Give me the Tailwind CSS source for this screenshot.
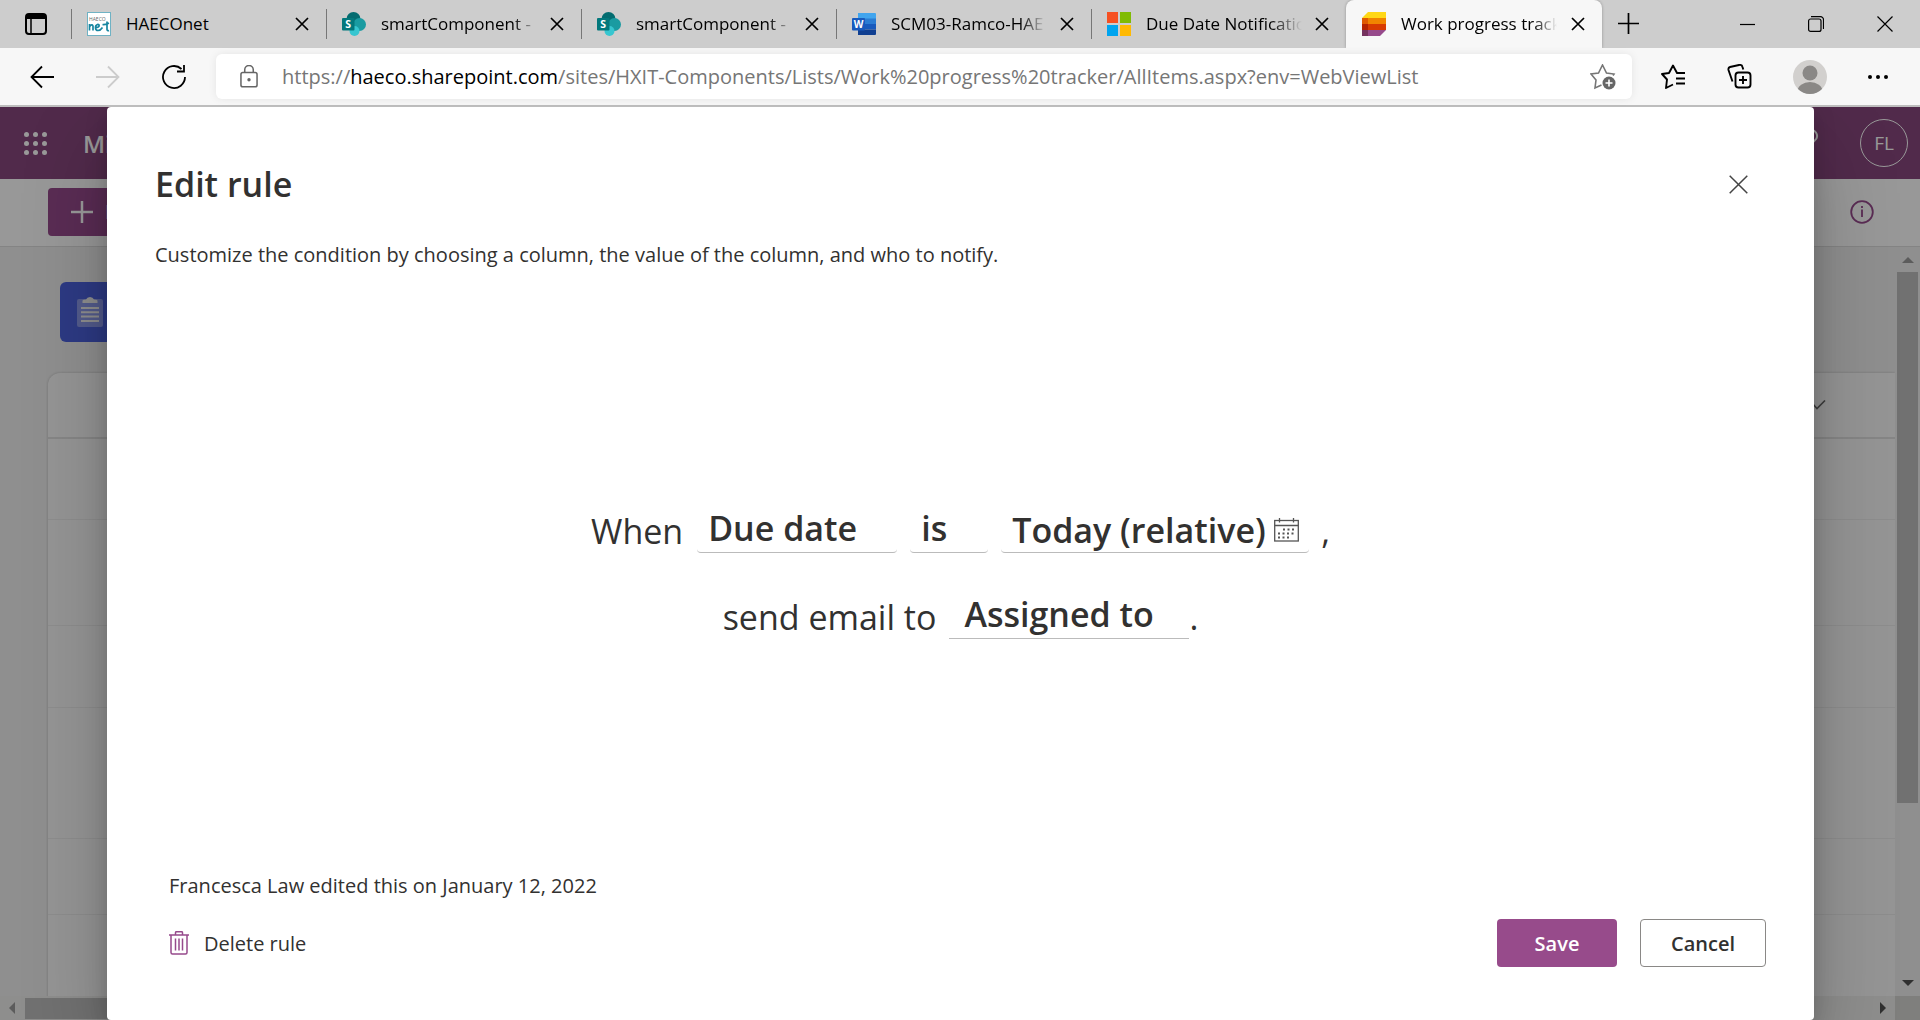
<!DOCTYPE html>
<html lang="en">
<head>
<meta charset="utf-8">
<title>Work progress tracker</title>
<script src="https://cdn.jsdelivr.net/npm/@tailwindcss/browser@4"></script>
</head>
<body class="flex h-screen flex-col overflow-hidden bg-[#cdcdcd] font-['Open_Sans','Noto_Sans',sans-serif] text-[#323130]">

<svg class="hidden">
  <symbol id="x" viewBox="0 0 14 14"><path d="M1 1l12 12M13 1L1 13" fill="none" stroke="currentColor" stroke-width="1.700"/></symbol>
  <symbol id="sharepoint" viewBox="0 0 24 24">
    <circle cx="11.500" cy="7" r="7" fill="#036c70"/><circle cx="17.500" cy="12.500" r="6.500" fill="#1a9ba1"/><circle cx="12.500" cy="19" r="5" fill="#37c6d0"/>
    <rect y="6" width="12.500" height="12.500" rx="1" fill="#03787c"/>
    <text x="6.200" y="16" text-anchor="middle" font-family="Open Sans" font-weight="700" font-size="10.500" fill="#fff">S</text>
  </symbol>
</svg>

<!-- Tab strip -->
<header class="flex h-12 shrink-0 text-[17px] text-black">
  <div class="flex w-[71px] shrink-0 items-center pl-6">
    <button aria-label="Tab actions"><svg class="size-6" viewBox="0 0 24 24"><rect x="2" y="2" width="20" height="20" rx="3" fill="none" stroke="#000" stroke-width="2"/><path d="M2 7V5a3 3 0 013-3h14a3 3 0 013 3v2z"/><path d="M7 7v15" stroke="#000" stroke-width="1.500"/></svg></button>
  </div>
  <nav class="flex min-w-0">
    <div class="relative flex w-[255px] items-center pr-[17px] pl-4 before:absolute before:left-0 before:h-[30px] before:w-px before:bg-[#777]">
      <svg class="mr-[15px] size-6 shrink-0" viewBox="0 0 24 24"><rect x=".5" y=".5" width="23" height="23" fill="#fff" stroke="#6fb2c4"/><text x="2" y="9" font-family="Open Sans" font-size="5" fill="#666">HAECO</text><path d="M2.500 12v6.500M2.500 15c1-3 4-3 3.500.500v3M8.500 15.500c5 0 4-3.500 2-3-3 1-2.500 6 .5 6 2 0 3.500-1.500 4.500-3M20 9.500v8c0 1 1 1.500 2 1M15.500 12.500c2 .5 4-.5 6.500-1.500" fill="none" stroke="#1785a0" stroke-width="1.700"/></svg>
      <a href="#" class="whitespace-nowrap">HAECOnet</a>
      <button class="ml-auto" aria-label="Close tab"><svg class="size-[14px]"><use href="#x"/></svg></button>
    </div>
    <div class="relative flex w-[255px] items-center pr-[17px] pl-4 before:absolute before:left-0 before:h-[30px] before:w-px before:bg-[#777]">
      <svg class="mr-[15px] size-6 shrink-0"><use href="#sharepoint"/></svg>
      <a href="#" class="whitespace-nowrap mask-[linear-gradient(90deg,#000_88%,rgba(0,0,0,.3))]">smartComponent -</a>
      <button class="ml-auto" aria-label="Close tab"><svg class="size-[14px]"><use href="#x"/></svg></button>
    </div>
    <div class="relative flex w-[255px] items-center pr-[17px] pl-4 before:absolute before:left-0 before:h-[30px] before:w-px before:bg-[#777]">
      <svg class="mr-[15px] size-6 shrink-0"><use href="#sharepoint"/></svg>
      <a href="#" class="whitespace-nowrap mask-[linear-gradient(90deg,#000_88%,rgba(0,0,0,.3))]">smartComponent -</a>
      <button class="ml-auto" aria-label="Close tab"><svg class="size-[14px]"><use href="#x"/></svg></button>
    </div>
    <div class="relative flex w-[255px] items-center pr-[17px] pl-4 before:absolute before:left-0 before:h-[30px] before:w-px before:bg-[#777]">
      <svg class="mr-[15px] size-6 shrink-0" viewBox="0 0 24 24"><path d="M6 1h17a1 1 0 011 1v5H6z" fill="#41a5ee"/><path d="M6 6.500h18V12H6z" fill="#2b7cd3"/><path d="M6 12h18v5.500H6z" fill="#185abd"/><path d="M6 17.500h18V22a1 1 0 01-1 1H6z" fill="#103f91"/><rect y="6" width="13" height="12.500" rx="1" fill="#185abd"/><text x="6.500" y="16" text-anchor="middle" font-family="Open Sans" font-weight="700" font-size="10" fill="#fff">W</text></svg>
      <a href="#" class="whitespace-nowrap mask-[linear-gradient(90deg,#000_85%,rgba(0,0,0,.1))]">SCM03-Ramco-HAE</a>
      <button class="ml-auto" aria-label="Close tab"><svg class="size-[14px]"><use href="#x"/></svg></button>
    </div>
    <div class="relative flex w-[255px] items-center pr-[17px] pl-4 before:absolute before:left-0 before:h-[30px] before:w-px before:bg-[#777]">
      <svg class="mr-[15px] size-6 shrink-0" viewBox="0 0 24 24"><path d="M0 0h11v11H0z" fill="#f65022"/><path d="M13 0h11v11H13z" fill="#80bb03"/><path d="M0 13h11v11H0z" fill="#00a4ef"/><path d="M13 13h11v11H13z" fill="#ffb902"/></svg>
      <a href="#" class="w-[156px] overflow-hidden whitespace-nowrap mask-[linear-gradient(90deg,#000_80%,transparent)]">Due Date Notification</a>
      <button class="ml-auto" aria-label="Close tab"><svg class="size-[14px]"><use href="#x"/></svg></button>
    </div>
    <div class="flex w-[256px] items-center rounded-t-lg bg-[#f7f7f7] pr-[17px] pl-4 shadow-[0_0_3px_rgba(0,0,0,.3)]">
      <svg class="mr-[15px] size-6 shrink-0" viewBox="0 0 24 24"><path d="M6 0h18v6H0z" fill="#ffd817"/><path d="M0 6h24v6H0z" fill="#f18500"/><path d="M0 6h6v6H0z" fill="#e05b00"/><path d="M0 12h24v6H0z" fill="#d83b01"/><path d="M0 12h6v6H0z" fill="#b52500"/><path d="M0 18h24l-6 6H0z" fill="#964a8b"/><path d="M0 18h6v6H0z" fill="#75325f"/></svg>
      <a href="#" class="w-[156px] overflow-hidden whitespace-nowrap mask-[linear-gradient(90deg,#000_85%,transparent)]">Work progress tracker</a>
      <button class="ml-auto" aria-label="Close tab"><svg class="size-[14px]"><use href="#x"/></svg></button>
    </div>
  </nav>
  <button class="ml-4 pb-px" aria-label="New tab"><svg class="size-[21px]" viewBox="0 0 21 21"><path d="M10.500 0v21M0 10.500h21" stroke="#000" stroke-width="1.700"/></svg></button>
  <div class="ml-auto flex items-center gap-[53px] pr-[27px]">
    <button aria-label="Minimize"><svg class="size-[15px]" viewBox="0 0 16 16"><path d="M0 8h16" stroke="#000" stroke-width="1.300"/></svg></button>
    <button aria-label="Restore"><svg class="size-4" viewBox="0 0 16 16" fill="none" stroke="#000" stroke-width="1.200"><rect x=".6" y="3" width="12.400" height="12.400" rx="2"/><path d="M3 .7h9.500a3 3 0 013 3V13"/></svg></button>
    <button aria-label="Close"><svg class="size-4" viewBox="0 0 16 16"><path d="M.5.500l15 15M15.500.500l-15 15" stroke="#000" stroke-width="1.200"/></svg></button>
  </div>
</header>

<!-- Address bar -->
<div class="relative flex h-[59px] shrink-0 items-center border-b-2 border-[#bdbdbd] bg-[#f7f7f7] pr-8">
  <div class="flex w-[216px] shrink-0 items-center gap-[42px] pl-[30px]">
    <button aria-label="Back"><svg class="size-6" viewBox="0 0 24 24" fill="none" stroke="#000" stroke-width="1.800"><path d="M24 12H1.500M12 1.500L1.500 12 12 22.500"/></svg></button>
    <button aria-label="Forward"><svg class="size-6" viewBox="0 0 24 24" fill="none" stroke="#ccc" stroke-width="1.800"><path d="M0 12h22.500M12 1.500L22.500 12 12 22.500"/></svg></button>
    <button aria-label="Refresh"><svg class="size-6" viewBox="0 0 24 24" fill="none" stroke="#000" stroke-width="1.800"><path d="M23 12a11 11 0 11-3.500-8M22 0v6.500h-7"/></svg></button>
  </div>
  <div class="flex h-[45px] min-w-0 flex-1 items-center rounded-md bg-white px-[16px] pl-6 shadow-[0_0_8px_rgba(0,0,0,.08)]">
    <svg class="w-[18px] shrink-0" viewBox="0 0 19 24" fill="none" stroke="#666" stroke-width="1.600"><rect x="1" y="8" width="17" height="15" rx="2"/><path d="M5 8V5a4.500 4.500 0 019 0v3"/><circle cx="9.500" cy="15.500" r="1" fill="#555"/></svg>
    <a href="#" class="ml-6 flex-1 overflow-hidden text-xl whitespace-nowrap text-[#767676]">https://<span class="text-black">haeco.sharepoint.com</span>/sites/HXIT-Components/Lists/Work%20progress%20tracker/AllItems.aspx?env=WebViewList</a>
    <button aria-label="Add to favorites"><svg class="size-[26px]" viewBox="0 0 26 26" fill="none" stroke="#767676" stroke-width="1.600"><path d="M11.500 21L5 24l1-8-5-6 7.500-1L12.500 1l4 8 7.500 1-1 1.500"/><circle cx="19" cy="19" r="6.500" fill="#666" stroke="none"/><path d="M19 15.500v7M15.500 19h7" stroke="#fff"/></svg></button>
  </div>
  <div class="ml-[29px] flex items-center gap-[41px]">
    <button aria-label="Favorites"><svg class="size-[25px]" viewBox="0 0 25 25" fill="none" stroke="#000" stroke-width="1.900" stroke-linejoin="round"><path d="M12 20.500L5 24l1-8.500-5-5.500 7-1 4-7.500L16 9h8M15 14.500h9M15 19.500h9"/></svg></button>
    <button aria-label="Collections"><svg class="size-[25px]" viewBox="0 0 25 25" fill="none" stroke="#000" stroke-width="1.900"><rect x="8.500" y="8.500" width="15" height="15" rx="3"/><path d="M16 12v8M12 16h8M5.500 17.500L1.500 6Q1 3.500 3 3l9-2q3-.5 3.500 2l.8 2.500"/></svg></button>
    <button aria-label="Profile"><svg class="size-[34px]" viewBox="0 0 34 34"><clipPath id="av"><circle cx="17" cy="17" r="17"/></clipPath><g clip-path="url(#av)"><rect width="34" height="34" fill="#d2d0ce"/><circle cx="17" cy="13" r="7.500" fill="#8a8886"/><ellipse cx="17" cy="31" rx="12.500" ry="9" fill="#8a8886"/></g></svg></button>
    <button aria-label="Settings and more"><svg class="w-5" viewBox="0 0 20 4"><circle cx="2" cy="2" r="2"/><circle cx="10" cy="2" r="2"/><circle cx="18" cy="2" r="2"/></svg></button>
  </div>
</div>

<!-- Page behind the dialog -->
<main class="relative flex min-h-0 flex-1 flex-col overflow-hidden bg-[#efefef]">
  <div class="flex h-[72px] shrink-0 items-center bg-[#87477d] pr-3 pl-6 text-white">
    <svg class="size-[23px]" viewBox="0 0 23 23" fill="currentColor"><circle cx="2.500" cy="2.500" r="2.500"/><circle cx="11.500" cy="2.500" r="2.500"/><circle cx="20.500" cy="2.500" r="2.500"/><circle cx="2.500" cy="11.500" r="2.500"/><circle cx="11.500" cy="11.500" r="2.500"/><circle cx="20.500" cy="11.500" r="2.500"/><circle cx="2.500" cy="20.500" r="2.500"/><circle cx="11.500" cy="20.500" r="2.500"/><circle cx="20.500" cy="20.500" r="2.500"/></svg>
    <span class="ml-9 pt-0.5 text-2xl font-semibold">Microsoft</span>
    <svg class="mr-[41px] mb-1 ml-auto h-6 w-4" viewBox="0 0 16 24" fill="none" stroke="currentColor" stroke-width="2"><path d="M2 6a6 6 0 1112 2c0 4-6 4-6 9M8 20v3"/></svg>
    <span class="flex size-12 items-center justify-center rounded-full border border-white text-[19px]">FL</span>
  </div>
  <div class="flex h-[68px] shrink-0 items-center border-b border-[#dcdcdc] bg-[#fdfdfd] pr-[46px] pl-12">
    <div class="mb-0.5 flex h-12 items-center rounded bg-[#964a8c] pr-6 pl-[23px] text-xl font-semibold text-white">
      <svg class="mr-3 size-[22px]" viewBox="0 0 22 22"><path d="M11 0v22M0 11h22" stroke="currentColor" stroke-width="2.500"/></svg>New
    </div>
    <svg class="mb-0.5 ml-auto size-6" viewBox="0 0 24 24" fill="none" stroke="#964a8c" stroke-width="1.800"><circle cx="12" cy="12" r="10.800"/><path d="M12 9.500V17M12 6v2"/></svg>
  </div>
  <div class="flex min-h-0 flex-1">
    <div class="flex min-w-0 flex-1 flex-col">
      <div class="min-h-0 flex-1 overflow-hidden pt-[35px] pl-12">
        <div class="ml-3 flex size-[60px] items-center rounded-md bg-[#4c62dd] pl-[17px]">
          <svg class="h-[30px] w-[26px]" viewBox="0 0 26 30"><rect y="2" width="26" height="28" rx="2" fill="#fff" fill-opacity=".35"/><path d="M5.500 6V3.500Q6 2.500 9 2.500 10 0 13 0t4 2.500q3 0 3.500 1V6z" fill="#ededed"/><path d="M4 11h18M4 15.300h18M4 19.600h18M4 24h18" stroke="#ededed" stroke-width="2"/></svg>
        </div>
        <table class="mt-[31px] h-[760px] w-full border-separate border-spacing-0 rounded-tl-xl bg-[#f9f9f9] shadow-[0_0_3px_rgba(0,0,0,.2)]">
          <thead><tr class="h-[66px]"><th class="border-b-2 border-[#e0e0e0] pr-[69px]"><svg class="ml-auto h-[10px] w-4" viewBox="0 0 16 10" fill="none" stroke="#666" stroke-width="1.600"><path d="M1 2l6 6.500 8-8"/></svg></th></tr></thead>
          <tbody>
            <tr class="h-[81px]"><td class="border-b border-[#ececec]"></td></tr>
            <tr class="h-[106px]"><td class="border-b border-[#ececec]"></td></tr>
            <tr class="h-[82px]"><td class="border-b border-[#ececec]"></td></tr>
            <tr class="h-[131px]"><td class="border-b border-[#ececec]"></td></tr>
            <tr class="h-[76px]"><td class="border-b border-[#ececec]"></td></tr>
            <tr><td></td></tr>
          </tbody>
        </table>
      </div>
      <div class="flex h-6 shrink-0 items-center justify-between bg-[#ededeb] pr-[9px] pl-[9px]">
        <svg class="h-3 w-[6px]" viewBox="0 0 6 12"><path d="M6 0v12L0 6z" fill="#9a9a9a"/></svg>
        <div class="mr-auto ml-[10px] h-[21px] w-3/4 bg-[#bcbcbc]"></div>
        <svg class="h-3 w-[6px]" viewBox="0 0 6 12"><path d="M0 0v12l6-6z" fill="#505050"/></svg>
      </div>
    </div>
    <div class="flex w-[25px] shrink-0 flex-col items-center">
      <svg class="mt-[10px] h-[6px] w-3" viewBox="0 0 12 6"><path d="M0 6h12L6 0z" fill="#9a9a9a"/></svg>
      <div class="mt-[9px] h-[531px] w-[21px] bg-[#bdbdbd]"></div>
      <svg class="mt-auto mb-[10px] h-[6px] w-3" viewBox="0 0 12 6"><path d="M0 0h12L6 6z" fill="#505050"/></svg>
      <div class="h-6 w-full bg-[#d4d4d0]"></div>
    </div>
  </div>

  <!-- Overlay and dialog -->
  <div class="absolute inset-0 flex bg-black/40 pr-[106px] pl-[107px]">
    <section role="dialog" aria-labelledby="dlg-title" class="flex flex-1 flex-col rounded-sm bg-white px-12 shadow-[0_38px_86px_rgba(0,0,0,.22),0_7px_22px_rgba(0,0,0,.18)]">
      <div class="flex items-center justify-between pt-[52px] pr-[18px]">
        <h1 id="dlg-title" class="text-[34px] leading-[50px] font-semibold">Edit rule</h1>
        <button aria-label="Close dialog"><svg class="size-[19px]" viewBox="0 0 19 19"><path d="M.7.700l17.600 17.600M18.300.700L.7 18.300" stroke="#444" stroke-width="1.500"/></svg></button>
      </div>
      <p class="mt-8 text-xl leading-7">Customize the condition by choosing a column, the value of the column, and who to notify.</p>
      <form class="flex flex-1 flex-col items-center justify-center gap-9 text-[34px]">
        <div class="flex h-[50px]">
          <label for="col" class="leading-[56px]">When</label>
          <select id="col" class="ml-[14px] w-[200px] appearance-none rounded-sm border-b border-[#bbb] pl-[11px] font-semibold"><option>Due date</option></select>
          <select aria-label="Condition" class="ml-[13px] w-[78px] appearance-none rounded-sm border-b border-[#bbb] pl-[11px] font-semibold"><option>is</option></select>
          <div class="ml-[13px] flex w-[308px] items-center rounded-sm border-b border-[#bbb] pt-1.5 pr-[10px] pl-[11px]">
            <input aria-label="Value" value="Today (relative)" class="h-11 w-0 flex-1 font-semibold outline-none">
            <button type="button" aria-label="Pick a date"><svg class="h-[24px] w-[25px]" viewBox="0 0 25 24" fill="none" stroke="#555" stroke-width="1.300"><rect x=".7" y="2.500" width="23.600" height="20.500"/><path d="M.7 7.500h23.600M5.500 0v4.500M19.500 0v4.500"/><path d="M9 11.500h13M4 15.500h16M4 19.500h13" stroke-width="2" stroke-dasharray="2 2.500"/></svg></button>
          </div>
          <span class="ml-3 leading-[56px]">,</span>
        </div>
        <div class="flex h-[50px]">
          <label for="who" class="leading-[56px]">send email to</label>
          <select id="who" class="ml-[13px] w-[240px] appearance-none border-b border-[#bbb] pl-[15px] font-semibold"><option>Assigned to</option></select>
          <span class="leading-[56px]">.</span>
        </div>
      </form>
      <footer class="pb-[53px] pl-[14px]">
        <p class="text-xl leading-7">Francesca Law edited this on January 12, 2022</p>
        <div class="mt-[19px] flex items-center">
          <button class="flex items-center gap-[15px] text-xl leading-7"><svg class="h-6 w-5" viewBox="0 0 20 24" fill="none" stroke="#964a8c" stroke-width="1.500"><path d="M0 4h20M2 4v17.500q0 1.500 1.500 1.500h13q1.500 0 1.500-1.500V4M6.500 4V1.700Q6.500.700 7.500.700h5q1 0 1 1V4M6.500 7.500v12M10 7.500v12M13.500 7.500v12"/></svg><span class="pt-0.5">Delete rule</span></button>
          <button class="ml-auto h-12 w-[120px] rounded bg-[#974b8b] pt-0.5 text-xl font-semibold text-white">Save</button>
          <button class="ml-[23px] h-12 w-[126px] rounded border border-[#8a8886] pt-0.5 text-xl font-semibold">Cancel</button>
        </div>
      </footer>
    </section>
  </div>
</main>
</body>
</html>
